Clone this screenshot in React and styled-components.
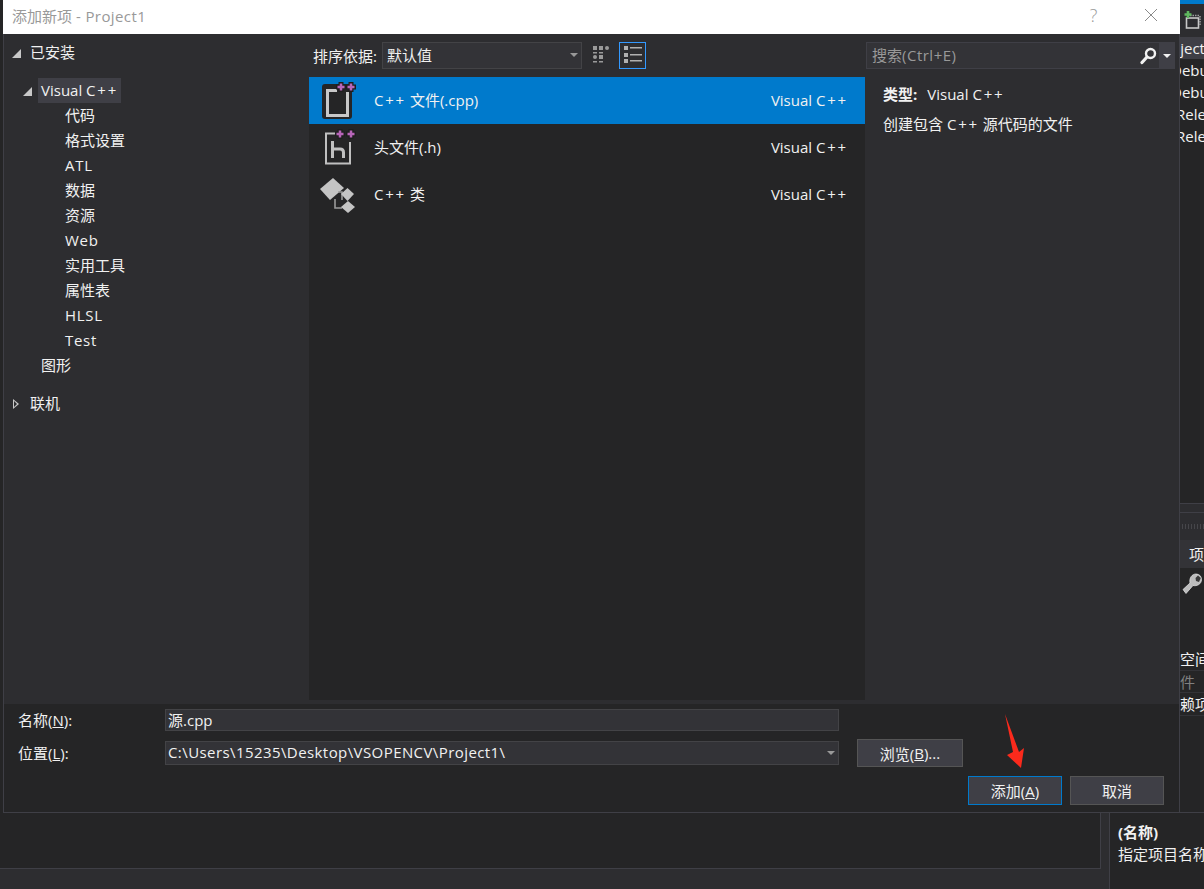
import React from "react";
import styled, { createGlobalStyle } from "styled-components";

const GlobalStyle = createGlobalStyle`
  html, body {
    margin: 0;
    padding: 0;
    background: #2d2d30;
  }
  * {
    box-sizing: border-box;
  }
`;

const FONT = `"Open Sans", "Noto Sans CJK SC", sans-serif`;

const treeItems = ["代码", "格式设置", "ATL", "数据", "资源", "Web", "实用工具", "属性表", "HLSL", "Test"];

// Latin glyphs run narrower here than in the original UI font
const Wide = styled.span`
  letter-spacing: ${(p) => p.$by}px;
`;

const Cpp = () => <Wide $by={1.8}>C++</Wide>;

const templates = [
  {
    id: "cpp",
    name: (
      <>
        <Cpp /> 文件(.cpp)
      </>
    ),
    icon: <CppIcon />,
    selected: true,
  },
  { id: "h", name: "头文件(.h)", icon: <HeaderIcon /> },
  {
    id: "class",
    name: (
      <>
        <Cpp /> 类
      </>
    ),
    icon: <ClassIcon />,
  },
];

function Plus({ x, y }) {
  return (
    <g>
      <path d={`M${x - 5} ${y}h10M${x} ${y - 5}v10`} stroke="#1e1e1e" strokeWidth="5" />
      <path d={`M${x - 3.5} ${y}h7M${x} ${y - 3.5}v7`} stroke="#b765b8" strokeWidth="2.5" />
    </g>
  );
}

function CppIcon() {
  return (
    <svg width="40" height="40" viewBox="0 0 40 40">
      <rect x="3" y="3" width="30" height="35" rx="3" fill="#252526" />
      <path d="M18 9.5H8.5v25h20V11" fill="none" stroke="#c8c8c8" strokeWidth="3" />
      <Plus x={22} y={6} />
      <Plus x={32} y={6} />
    </svg>
  );
}

function HeaderIcon() {
  return (
    <svg width="40" height="40" viewBox="0 0 40 40">
      <path d="M17 5.5H7v30h24V14" fill="none" stroke="#c0c0c0" strokeWidth="2" />
      <path d="M13.5 13v17M13.5 21h7.5q3.5 0 3.5 3.5V30" fill="none" stroke="#c0c0c0" strokeWidth="3" />
      <Plus x={21} y={6} />
      <Plus x={32} y={6} />
    </svg>
  );
}

function ClassIcon() {
  return (
    <svg width="40" height="40" viewBox="0 0 40 40">
      <path d="M1 14 14 3 25 13 11 25Z" fill="#c4c4c4" />
      <path d="M16 24v9h7M19 17h4v8" fill="none" stroke="#9a9a9a" strokeWidth="1.6" />
      <path d="M22 19 28.5 13 35 19 28.5 26Z" fill="#c4c4c4" />
      <path d="M22 32 29 26 36 32 29 38Z" fill="#c4c4c4" />
    </svg>
  );
}

function GridIcon() {
  return (
    <svg width="20" height="20" viewBox="0 0 20 20" fill="#9a9a9a">
      <rect x="1" y="1" width="4" height="4" />
      <rect x="7" y="1" width="4" height="4" />
      <circle cx="15" cy="3" r="2" />
      <rect x="1" y="7" width="4" height="1.5" />
      <rect x="7" y="7" width="4" height="1.5" />
      <circle cx="3" cy="12" r="2" />
      <rect x="7" y="10" width="4" height="4" />
      <rect x="1" y="16" width="4" height="1.5" />
      <rect x="7" y="16" width="4" height="1.5" />
    </svg>
  );
}

function ListIcon() {
  return (
    <svg width="20" height="20" viewBox="0 0 20 20" fill="#b0b0b0">
      <rect x="1" y="1" width="4" height="4" />
      <rect x="1" y="8" width="4" height="4" />
      <rect x="1" y="14" width="4" height="4" />
      <rect x="7" y="2" width="12" height="1.5" />
      <rect x="7" y="9" width="12" height="1.5" />
      <rect x="7" y="15" width="12" height="1.5" />
    </svg>
  );
}

function SearchIcon() {
  return (
    <svg width="18" height="18" viewBox="0 0 18 18">
      <circle cx="10.5" cy="6.5" r="4.5" fill="none" stroke="#f1f1f1" strokeWidth="2.4" />
      <path d="M7 10 2 15.5" stroke="#f1f1f1" strokeWidth="3.2" strokeLinecap="round" />
    </svg>
  );
}

function CloseIcon() {
  return (
    <svg width="14" height="14" viewBox="0 0 14 14">
      <path d="M1 1 13 13M13 1 1 13" stroke="#8a8a8a" strokeWidth="1" fill="none" />
    </svg>
  );
}

function AddWindowIcon() {
  return (
    <svg width="18" height="20" viewBox="0 0 18 20">
      <rect x="2.5" y="8" width="12" height="10" fill="none" stroke="#c8c8c8" strokeWidth="1.6" />
      <path d="M6 5.5h10M16 6v9" stroke="#a0a0a0" strokeWidth="1.5" strokeDasharray="1.5 1" fill="none" />
      <path d="M4 1v7M0.5 4.5h7" stroke="#5fb85f" strokeWidth="2.6" />
    </svg>
  );
}

function WrenchIcon() {
  return (
    <svg width="20" height="21" viewBox="0 0 20 21">
      <path
        d="M1 16.5 8 10C7 5 10 1 14 1c3.500 0 5.500 2.500 5.500 5.500C19.500 11 15 13.500 11 12.500L4 20.500Z"
        fill="#bdbdbd"
        stroke="#e8e8e8"
        strokeWidth="0.7"
      />
      <path d="M13.500 5 16 2.500 18.800 5 17 9 14 8Z" fill="#3a3a3a" />
    </svg>
  );
}

function RedArrow() {
  return (
    <svg width="24" height="56" viewBox="0 0 24 56">
      <path d="M1 1 15 39 20 35 17 55 3 42 9 39Z" fill="#fb2a1c" />
    </svg>
  );
}

export default function App() {
  return (
    <Desktop>
      <GlobalStyle />
      <Backdrop>
        <MainColumn>
          <EditorArea />
        </MainColumn>
        <SidePanel>
          <AccentStrip />
          <SideToolbar>
            <AddWindowIcon />
          </SideToolbar>
          <SideRow $indent={46} $active>Project1</SideRow>
          <SideRow $indent={61}>Debug</SideRow>
          <SideRow $indent={61}>Debug</SideRow>
          <SideRow $indent={66}>Release</SideRow>
          <SideRow $indent={66}>Release</SideRow>
          <SideGap $height={356} />
          <GripBar />
          <PropHeader>项目</PropHeader>
          <WrenchRow>
            <WrenchIcon />
          </WrenchRow>
          <PropRow $indent={40}>命名空间</PropRow>
          <PropRow $indent={40} $dim>源文件</PropRow>
          <PropRow $indent={55}>依赖项</PropRow>
          <SideGap $height={96.5} />
          <DescBox>
            <DescTitle>(名称)</DescTitle>
            <div>指定项目名称</div>
          </DescBox>
        </SidePanel>
      </Backdrop>

      <Dialog>
        <TitleBar>
          <TitleText>
            添加新项 <Wide $by={0.4}>- Project1</Wide>
          </TitleText>
          <TitleButton>?</TitleButton>
          <TitleButton>
            <CloseIcon />
          </TitleButton>
        </TitleBar>
        <DialogContent>
          <DialogBody>
            <TreePane>
              <TreeRow $level={0}>
                <ExpandedMark />
                <span>已安装</span>
              </TreeRow>
              <TreeGroup>
                <TreeRow $level={1}>
                  <ExpandedMark />
                  <TreeSelected>
                    Visual <Cpp />
                  </TreeSelected>
                </TreeRow>
                {treeItems.map((item) => (
                  <TreeRow $level={2} key={item}>
                    {/^[A-Za-z]+$/.test(item) ? <Wide $by={0.7}>{item}</Wide> : item}
                  </TreeRow>
                ))}
                <TreeRow $level={3}>图形</TreeRow>
              </TreeGroup>
              <TreeGroup>
                <TreeRow $level={0}>
                  <CollapsedMark />
                  <span>联机</span>
                </TreeRow>
              </TreeGroup>
            </TreePane>

            <CenterPane>
              <SortBar>
                <SortLabel>排序依据:</SortLabel>
                <SortSelect>
                  默认值
                  <SmallCaret />
                </SortSelect>
                <ViewButton>
                  <GridIcon />
                </ViewButton>
                <ViewButton $active>
                  <ListIcon />
                </ViewButton>
              </SortBar>
              <TemplateList>
                {templates.map((t) => (
                  <TemplateRow key={t.id} $selected={t.selected}>
                    <TemplateIcon>{t.icon}</TemplateIcon>
                    <TemplateName>{t.name}</TemplateName>
                    <TemplateKind>
                      Visual <Cpp />
                    </TemplateKind>
                  </TemplateRow>
                ))}
              </TemplateList>
            </CenterPane>

            <InfoPane>
              <SearchBox>
                <SearchText>
                  搜索<Wide $by={0.5}>(Ctrl+E)</Wide>
                </SearchText>
                <SearchGlass>
                  <SearchIcon />
                </SearchGlass>
                <SearchMenu>
                  <WhiteCaret />
                </SearchMenu>
              </SearchBox>
              <InfoType>
                <b>类型:</b>
                <span>
                  Visual <Cpp />
                </span>
              </InfoType>
              <InfoDesc>
                创建包含 <Cpp /> 源代码的文件
              </InfoDesc>
            </InfoPane>
          </DialogBody>

          <Footer>
            <FieldRow>
              <FieldLabel>
                名称(<u>N</u>):
              </FieldLabel>
              <Field>源.cpp</Field>
            </FieldRow>
            <FieldRow $tall>
              <FieldLabel>
                位置(<u>L</u>):
              </FieldLabel>
              <Field>
                <Wide $by={0.42}>C:\Users\15235\Desktop\VSOPENCV\Project1\</Wide>
                <SmallCaret />
              </Field>
              <BrowseButton>
                浏览(<u>B</u>)...
              </BrowseButton>
            </FieldRow>
            <ActionRow>
              <ActionButton $primary>
                添加(<u>A</u>)
              </ActionButton>
              <ActionButton>取消</ActionButton>
            </ActionRow>
          </Footer>
        </DialogContent>
      </Dialog>

      <ArrowMark>
        <RedArrow />
      </ArrowMark>
    </Desktop>
  );
}

const Desktop = styled.div`
  position: relative;
  width: 1204px;
  height: 889px;
  overflow: hidden;
  background: #2d2d30;
  color: #f1f1f1;
  font-family: ${FONT};
  font-size: 15px;
`;

const Backdrop = styled.div`
  display: flex;
  height: 100%;
`;

const MainColumn = styled.div`
  width: 1109px;
  flex: none;
`;

const EditorArea = styled.div`
  width: 1101px;
  height: 869px;
  background: #252526;
  border-right: 1px solid #3f3f46;
  border-bottom: 1px solid #3f3f46;
`;

const SidePanel = styled.div`
  flex: 1;
  min-width: 0;
  display: flex;
  flex-direction: column;
  overflow: hidden;
  background: #252526;
  border-left: 1px solid #3f3f46;
  white-space: nowrap;
`;

const AccentStrip = styled.div`
  height: 4px;
  flex: none;
  background: #007acc;
`;

const SideToolbar = styled.div`
  height: 33px;
  flex: none;
  padding: 6px 0 0 74px;
  background: #2d2d30;
`;

const SideRow = styled.div`
  height: 22px;
  flex: none;
  line-height: 22px;
  padding-left: ${(p) => p.$indent}px;
  background: ${(p) => (p.$active ? "#3f3f46" : "transparent")};
`;

const SideGap = styled.div`
  height: ${(p) => p.$height}px;
  flex: none;
`;

const GripBar = styled.div`
  height: 37px;
  flex: none;
  position: relative;
  border-top: 1px solid #3f3f46;
  background: #2d2d30;

  &::before {
    content: "";
    display: block;
    height: 1px;
    margin-top: 8px;
    background: #3f3f46;
  }

  &::after {
    content: "";
    display: block;
    height: 5px;
    margin-top: 11px;
    background: repeating-linear-gradient(90deg, #46464a 0 1px, transparent 1px 3px);
  }
`;

const PropHeader = styled.div`
  height: 28px;
  flex: none;
  line-height: 28px;
  padding-left: 79px;
  background: #333337;
`;

const WrenchRow = styled.div`
  height: 80px;
  flex: none;
  padding: 5px 0 0 72px;
`;

const PropRow = styled.div`
  height: 22.5px;
  flex: none;
  line-height: 22px;
  padding-left: ${(p) => p.$indent}px;
  color: ${(p) => (p.$dim ? "#808080" : "#f1f1f1")};
  border-bottom: 1px solid #333337;
`;

const DescBox = styled.div`
  height: 77px;
  flex: none;
  padding: 8px 0 0 8px;
  border-top: 1px solid #3f3f46;
  line-height: 22px;
`;

const DescTitle = styled.div`
  font-weight: 700;
`;

const Dialog = styled.div`
  position: absolute;
  left: 3px;
  top: 0;
  width: 1177px;
  height: 813px;
  display: flex;
  flex-direction: column;
`;

const TitleBar = styled.div`
  height: 34px;
  flex: none;
  display: flex;
  align-items: center;
  padding: 0 1px 4px 9px;
  background: #ffffff;
`;

const TitleText = styled.div`
  flex: 1;
  color: #999999;
`;

const TitleButton = styled.div`
  width: 57px;
  display: flex;
  justify-content: center;
  align-items: center;
  color: #999999;
  font-size: 18px;
  font-weight: 300;
`;

const DialogContent = styled.div`
  flex: 1;
  min-height: 0;
  display: flex;
  flex-direction: column;
  border: 1px solid #3f3f46;
  border-top: none;
`;

const DialogBody = styled.div`
  height: 670px;
  flex: none;
  display: flex;
  background: #2d2d30;
`;

const TreePane = styled.div`
  width: 305px;
  flex: none;
  padding-top: 6px;
`;

const TreeGroup = styled.div`
  margin-top: 13px;
`;

const TREE_INDENT = [26, 37, 61, 37];

const TreeRow = styled.div`
  position: relative;
  height: 25px;
  line-height: 25px;
  padding-left: ${(p) => TREE_INDENT[p.$level]}px;
`;

const ExpandedMark = styled.i`
  display: inline-block;
  width: 0;
  height: 0;
  margin-left: -18px;
  margin-right: 9px;
  border-style: solid;
  border-width: 0 0 9px 9px;
  border-color: transparent transparent #c8c8c8 transparent;
`;

const CollapsedMark = styled.i`
  display: inline-block;
  position: relative;
  width: 0;
  height: 0;
  margin-left: -17px;
  margin-right: 11px;
  border-style: solid;
  border-width: 5.5px 0 5.5px 6px;
  border-color: transparent transparent transparent #c8c8c8;

  &::after {
    content: "";
    position: absolute;
    left: -5px;
    top: -3.5px;
    border-style: solid;
    border-width: 3.5px 0 3.5px 3.5px;
    border-color: transparent transparent transparent #2d2d30;
  }
`;

const TreeSelected = styled.span`
  display: inline-block;
  height: 25px;
  margin-left: -3px;
  padding: 0 3px;
  background: #3f3f46;
`;

const CenterPane = styled.div`
  width: 556px;
  flex: none;
  display: flex;
  flex-direction: column;
`;

const SortBar = styled.div`
  height: 43px;
  flex: none;
  display: flex;
  align-items: center;
  padding: 0 0 1px 4px;
`;

const SortLabel = styled.div`
  width: 69px;
  flex: none;
`;

const SmallCaret = styled.i`
  position: absolute;
  right: 3px;
  top: 50%;
  margin-top: -2px;
  border-style: solid;
  border-width: 4px 4px 0;
  border-color: #999999 transparent transparent;
`;

const WhiteCaret = styled.i`
  border-style: solid;
  border-width: 4px 4px 0;
  border-color: #f1f1f1 transparent transparent;
`;

const SortSelect = styled.div`
  position: relative;
  width: 200px;
  height: 27px;
  line-height: 25px;
  padding-left: 4px;
  margin-right: 6px;
  background: #333337;
  border: 1px solid #434346;
`;

const ViewButton = styled.div`
  width: 27px;
  height: 27px;
  flex: none;
  display: flex;
  align-items: center;
  justify-content: center;
  margin-left: ${(p) => (p.$active ? "4px" : "0")};
  border: 1px solid ${(p) => (p.$active ? "#3399ff" : "transparent")};
`;

const TemplateList = styled.div`
  height: 623px;
  flex: none;
  background: #252526;
`;

const TemplateRow = styled.div`
  height: 47px;
  display: flex;
  align-items: center;
  padding: 0 17px 0 10px;
  background: ${(p) => (p.$selected ? "#007acc" : "transparent")};
`;

const TemplateIcon = styled.div`
  width: 55px;
  flex: none;
  display: flex;
`;

const TemplateName = styled.div`
  flex: 1;
  padding-bottom: 2px;
`;

const TemplateKind = styled.div`
  padding-bottom: 2px;
`;

const InfoPane = styled.div`
  flex: 1;
  min-width: 0;
`;

const SearchBox = styled.div`
  display: flex;
  align-items: stretch;
  height: 27px;
  margin: 8px 4px 0 1px;
  background: #333337;
  border: 1px solid #3f3f46;
`;

const SearchText = styled.div`
  flex: 1;
  padding-left: 5px;
  line-height: 25px;
  color: #999999;
`;

const SearchGlass = styled.div`
  width: 20px;
  display: flex;
  align-items: center;
  justify-content: center;
`;

const SearchMenu = styled.div`
  width: 15px;
  display: flex;
  align-items: center;
  justify-content: center;
  background: #3f3f46;
`;

const InfoType = styled.div`
  display: flex;
  gap: 10px;
  margin: 14px 0 0 18px;
  line-height: 22px;

  b {
    font-weight: 700;
  }
`;

const InfoDesc = styled.div`
  margin: 8px 0 0 18px;
  line-height: 22px;
`;

const Footer = styled.div`
  flex: 1;
  min-height: 0;
  padding: 5px 15px 0 14px;
  background: #252526;
`;

const FieldRow = styled.div`
  display: flex;
  align-items: center;
  height: ${(p) => (p.$tall ? "24px" : "22px")};
  margin-top: ${(p) => (p.$tall ? "10px" : "0")};
`;

const FieldLabel = styled.div`
  width: 147px;
  flex: none;
  padding-bottom: 2px;
`;

const Field = styled.div`
  position: relative;
  width: 674px;
  height: 100%;
  flex: none;
  display: flex;
  align-items: center;
  padding: 0 0 2px 2px;
  background: #333337;
  border: 1px solid #434346;
`;

const BrowseButton = styled.div`
  width: 106px;
  height: 28px;
  flex: none;
  margin-left: 18px;
  display: flex;
  align-items: center;
  justify-content: center;
  background: #3f3f46;
  border: 1px solid #555555;
`;

const ActionRow = styled.div`
  display: flex;
  justify-content: flex-end;
  gap: 8px;
  margin-top: 11px;
`;

const ActionButton = styled.div`
  width: 94px;
  height: 29px;
  display: flex;
  align-items: center;
  justify-content: center;
  background: #3f3f46;
  border: 1px solid ${(p) => (p.$primary ? "#007acc" : "#555555")};
`;

const ArrowMark = styled.div`
  position: absolute;
  left: 1004px;
  top: 713px;
  line-height: 0;
`;
